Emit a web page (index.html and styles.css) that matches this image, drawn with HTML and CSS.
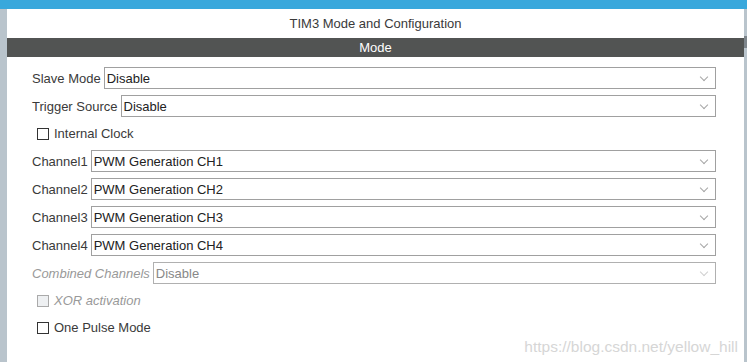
FILE: index.html
```html
<!DOCTYPE html>
<html lang="en">

<head>
    <meta charset="UTF-8">
    <meta name="viewport" content="width=device-width, initial-scale=1.0">
    <title>TIM3 Mode and Configuration</title>
    <link rel="stylesheet" href="styles.css">
</head>

<body>
    <!-- 顶部蓝条 -->
    <div class="topbar"></div>

    <div class="frame">
        <div class="side"></div>

        <!-- 主面板 -->
        <div class="panel">
            <div class="title">TIM3 Mode and Configuration</div>
            <div class="section">Mode</div>

            <div class="form">
                <div class="row">
                    <span class="label">Slave Mode</span>
                    <div class="select">Disable<span class="arrow"></span></div>
                </div>
                <div class="row">
                    <span class="label">Trigger Source</span>
                    <div class="select">Disable<span class="arrow"></span></div>
                </div>
                <div class="row check-row">
                    <span class="box"></span>
                    <span class="label">Internal Clock</span>
                </div>
                <div class="row">
                    <span class="label">Channel1</span>
                    <div class="select">PWM Generation CH1<span class="arrow"></span></div>
                </div>
                <div class="row">
                    <span class="label">Channel2</span>
                    <div class="select">PWM Generation CH2<span class="arrow"></span></div>
                </div>
                <div class="row">
                    <span class="label">Channel3</span>
                    <div class="select">PWM Generation CH3<span class="arrow"></span></div>
                </div>
                <div class="row">
                    <span class="label">Channel4</span>
                    <div class="select">PWM Generation CH4<span class="arrow"></span></div>
                </div>
                <div class="row disabled">
                    <span class="label">Combined Channels</span>
                    <div class="select">Disable<span class="arrow"></span></div>
                </div>
                <div class="row check-row disabled">
                    <span class="box"></span>
                    <span class="label">XOR activation</span>
                </div>
                <div class="row check-row">
                    <span class="box"></span>
                    <span class="label">One Pulse Mode</span>
                </div>
            </div>

            <div class="watermark">https://blog.csdn.net/yellow_hill</div>
        </div>

        <!-- 右侧滚动条 -->
        <div class="scroll">
            <div class="thumb"></div>
        </div>
    </div>
</body>

</html>
```

FILE: styles.css
```css
* {
    margin: 0;
    padding: 0;
    box-sizing: border-box;
}

body {
    width: 747px;
    height: 362px;
    overflow: hidden;
    background-color: #fff;
    font-family: "Liberation Sans", Arial, sans-serif;
    font-size: 13px;
    color: #333;
}

/* 顶部蓝条 */
.topbar {
    height: 9px;
    background-color: #39a8dc;
}

.frame {
    display: flex;
    height: 353px;
}

.side {
    width: 7px;
    background-color: #b9c4cc;
}

.panel {
    flex: 1;
    display: flex;
    flex-direction: column;
}

.title {
    height: 29px;
    line-height: 29px;
    text-align: center;
    color: #3a3a3a;
}

/* 深色标题栏 */
.section {
    height: 19px;
    line-height: 19px;
    text-align: center;
    color: #fff;
    background-color: #525453;
}

.form {
    display: flex;
    flex-direction: column;
    gap: 6px;
    padding: 10px 28px 0 25px;
}

.row {
    display: flex;
    align-items: center;
    gap: 3px;
    height: 22px;
}

.label {
    white-space: nowrap;
    color: #3a3a3a;
}

.select {
    flex: 1;
    position: relative;
    height: 22px;
    line-height: 21px;
    padding-left: 2px;
    border: 1px solid #a0a0a0;
    color: #222;
}

/* 下拉箭头 */
.select .arrow {
    position: absolute;
    right: 8px;
    top: 6px;
    width: 6px;
    height: 6px;
    border-right: 1px solid #a6a6a6;
    border-bottom: 1px solid #a6a6a6;
    transform: rotate(45deg);
}

.check-row {
    height: 21px;
    gap: 5px;
    padding-left: 5px;
}

.box {
    width: 12px;
    height: 12px;
    border: 1px solid #333;
    background-color: #fff;
}

/* 禁用状态 */
.disabled .label {
    font-style: italic;
    color: #999;
}

.disabled .select {
    color: #888;
    border-color: #b0b0b0;
}

.disabled .select .arrow {
    border-color: #d0d0d0;
}

.disabled .box {
    border-color: #aaa;
    background-color: #eef0f2;
}

.watermark {
    margin-top: auto;
    margin-bottom: 8px;
    text-align: right;
    padding-right: 6px;
    font-size: 15.5px;
    color: #d6d6d6;
}

.scroll {
    width: 3px;
    background-color: #b9c4cc;
    padding-top: 27px;
}

.thumb {
    height: 12px;
    background-color: #7d858b;
}
```
